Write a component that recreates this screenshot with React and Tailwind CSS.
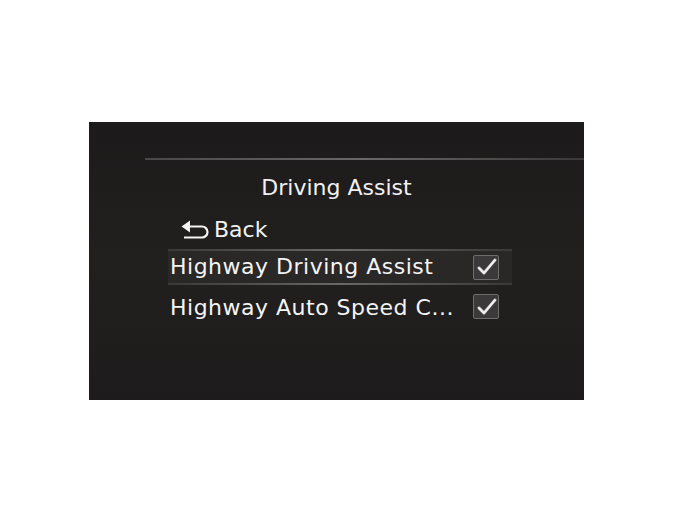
import React from 'react'

// Check mark box used in the settings list
const CheckBox = () => (
    <div className="w-[26px] h-[25px] border-[1.5px] border-[#6e6c6c] rounded-[2px] bg-[#3b3939] flex items-center justify-center">
        <svg width="22" height="20" viewBox="0 0 22 20" fill="none">
            <path d="M4 11 L9 16 L20 3" stroke="#9a9898" strokeWidth="3.2" strokeLinecap="round" strokeLinejoin="round" />
            <path d="M4 11 L9 16 L20 3" stroke="#f4f4f4" strokeWidth="2" strokeLinecap="round" strokeLinejoin="round" />
        </svg>
    </div>
)

const BackArrow = () => (
    <svg width="28" height="20" viewBox="0 0 28 20" fill="none" className="-mt-[2px]">
        <path d="M7 7.5 H21 A5.5 5.5 0 0 1 21 18.5 H3" stroke="#f4f4f4" strokeWidth="2.2" />
        <path d="M0.5 7.5 L9 1.5 L9 13.5 Z" fill="#f4f4f4" />
    </svg>
)

const Divider = () => (
    <div className="h-[2px] bg-gradient-to-r from-[#3a3838] via-[#6a6868] to-[#3a3838]" />
)

export default function App() {
    return (
        <div className="w-[673px] h-[522px] bg-white pt-[122px] pl-[89px]" style={{ fontFamily: '"DejaVu Sans", sans-serif' }}>
            <div className="w-[495px] h-[278px] bg-gradient-to-b from-[#1c1a1a] via-[#221f1f] to-[#1d1b1b] flex flex-col">
                <div className="mt-[36px] ml-[56px] h-[2px] bg-gradient-to-r from-[#4a4848] via-[#6a6868] to-[#3a3838]" />
                <div className="mt-[14px] text-center text-[22px] text-[#f2f2f2] leading-[28px]">Driving Assist</div>
                <div className="mt-[14px] ml-[92px] flex items-center gap-[5px] text-[22px] text-[#f2f2f2] leading-[28px]">
                    <BackArrow />
                    <span>Back</span>
                </div>
                <div className="mt-[5px] ml-[79px] w-[344px]">
                    <Divider />
                    <div className="h-[32px] bg-[#2a2727] flex items-center justify-between pl-[2px] pr-[13px]">
                        <span className="text-[22px] text-[#f4f4f4] leading-[28px] tracking-[0.5px]">Highway Driving Assist</span>
                        <CheckBox />
                    </div>
                    <Divider />
                    <div className="flex items-start justify-between pt-[9px] pl-[2px] pr-[13px]">
                        <span className="text-[22px] text-[#f4f4f4] leading-[28px] tracking-[0.5px]">Highway Auto Speed C...</span>
                        <CheckBox />
                    </div>
                </div>
            </div>
        </div>
    )
}
